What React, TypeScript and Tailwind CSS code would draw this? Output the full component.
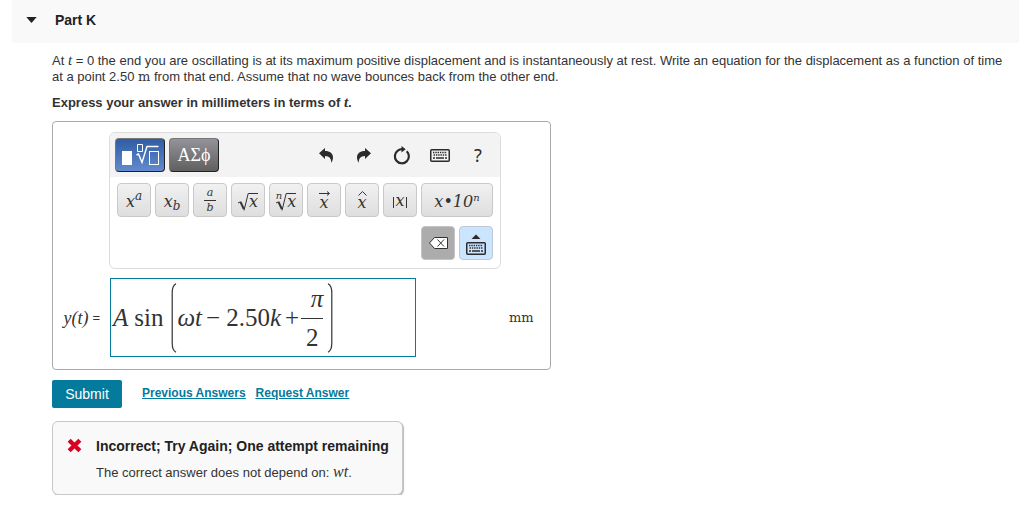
import type { ReactNode } from "react";

const serif = "font-['Liberation_Serif',serif]";

function ToolButton({ label, wide, children }: { label: string; wide?: boolean; children: ReactNode }) {
  return (
    <button
      type="button"
      aria-label={label}
      className={`flex h-[34px] items-center justify-center rounded border border-[#c9c9c9] bg-linear-to-b from-[#f1f1f1] to-[#dedede] pt-1 text-[#333] font-['DejaVu_Serif','Liberation_Serif',serif] text-base leading-none italic ${wide ? "w-[72px]" : "w-[34px]"}`}
    >
      {children}
    </button>
  );
}

function IconButton({ label, children }: { label: string; children: ReactNode }) {
  return (
    <button type="button" aria-label={label} className="flex h-[34px] w-[34px] items-center justify-center text-[#2b2b2b]">
      {children}
    </button>
  );
}

function Keyboard() {
  return (
    <svg width="20" height="13" viewBox="0 0 20 13" fill="none" stroke="currentColor" aria-hidden="true">
      <rect x="0.75" y="0.75" width="18.5" height="11.5" rx="1" strokeWidth="1.5" />
      <path d="M3 3.5h14M3.600 6h13" strokeWidth="1.3" strokeDasharray="1.4 0.9" />
      <path d="M3 9h2M6 9h8M15 9h2" strokeWidth="1.400" />
    </svg>
  );
}

function UndoArrow({ flip }: { flip?: boolean }) {
  return (
    <svg width="14" height="15" viewBox="0 0 14 15" fill="currentColor" className={flip ? "-scale-x-100" : ""} aria-hidden="true">
      <path d="M0 5.2 6 0v3.1c5.200 0 8 2.600 8 6.300 0 2.200-.8 3.900-1.900 5.300.3-3.700-1.300-6.500-6.100-6.700v2.900z" />
    </svg>
  );
}

function Radical({ nth }: { nth?: boolean }) {
  return (
    <span className="flex items-start">
      {nth && <span className="-mt-0.5 -mr-1.5 text-[10px] leading-none">n</span>}
      <svg width="11" height="18" viewBox="0 0 11 18" fill="none" stroke="currentColor" aria-hidden="true">
        <path d="M0 10l2.500-1.200" />
        <path d="M2.500 8.800 5.800 16" strokeWidth="2" />
        <path d="M6 17.500 10.200.5H11" />
      </svg>
      <span className="h-[18px] border-t border-[#333]">x</span>
    </span>
  );
}

function Paren({ flip }: { flip?: boolean }) {
  return (
    <svg width="6" height="70" viewBox="0 0 6 70" fill="none" stroke="#333" className={flip ? "-scale-x-100" : ""} aria-hidden="true">
      <path d="M5 .7C2.300 2 1.200 5 1.200 10v50c0 5 1.100 8 3.800 9.300" strokeWidth="1.2" />
    </svg>
  );
}

function MathToolbar() {
  return (
    <div className="w-[392px] rounded-md border border-[#dcdcdc] bg-white">
      <div className="flex h-11 items-center justify-between rounded-t-md bg-[#f3f3f3] px-[5px]">
        <div className="flex gap-1">
          <button type="button" aria-label="Templates" className="flex h-[34px] w-[50px] items-center justify-center rounded border border-[#777] border-r-[#222] border-b-[#222] bg-linear-to-b from-[#2f5ca4] to-[#638bcd]">
            <svg width="38" height="24" viewBox="0 0 38 24" fill="none" stroke="white" aria-hidden="true">
              <rect x="1" y="8" width="10" height="14" fill="white" stroke="none" />
              <path d="M16.500 1.500h5v7h-5z" />
              <path d="M15.500 12l2-1 3.500 8.500L26 3.500h11.500" strokeWidth="1.4" />
              <rect x="28.500" y="8.500" width="9" height="13" />
            </svg>
          </button>
          <button type="button" aria-label="Symbols" className="flex h-[34px] w-[50px] items-center justify-center rounded border border-[#777] border-r-[#222] border-b-[#222] bg-linear-to-b from-[#94939a] to-[#606060] font-['Liberation_Serif',serif] text-lg leading-none text-white">
            ΑΣϕ
          </button>
        </div>
        <div className="flex gap-1">
          <IconButton label="Undo"><UndoArrow /></IconButton>
          <IconButton label="Redo"><UndoArrow flip /></IconButton>
          <IconButton label="Reset">
            <svg width="18" height="19" viewBox="0 0 18 19" fill="none" stroke="currentColor" aria-hidden="true">
              <path d="M13.700 5.200A7 7 0 1 1 4.800 4.600Q6.500 3.200 9.500 3.200" strokeWidth="2.200" />
              <path d="M8.500 0 12.700 3.300 8.500 6.500z" fill="currentColor" stroke="none" />
            </svg>
          </IconButton>
          <IconButton label="Keyboard shortcuts"><Keyboard /></IconButton>
          <IconButton label="Help"><span className="font-['Noto_Sans',sans-serif] text-lg leading-none">?</span></IconButton>
        </div>
      </div>
      <div className="flex flex-col items-end gap-[9px] px-[7px] pt-1.5 pb-2">
        <div className="flex gap-1">
          <ToolButton label="Superscript"><span>x</span><sup className="-top-1.5 text-xs leading-none">a</sup></ToolButton>
          <ToolButton label="Subscript"><span>x</span><sub className="top-1 bottom-auto text-xs leading-none">b</sub></ToolButton>
          <ToolButton label="Fraction">
            <span className="flex flex-col pb-1 text-[11px] leading-[10px]">
              <span className="border-b border-[#333] px-0.5 pb-0.5">a</span>
              <span className="px-0.5 pt-0.5">b</span>
            </span>
          </ToolButton>
          <ToolButton label="Square root"><Radical /></ToolButton>
          <ToolButton label="Nth root"><Radical nth /></ToolButton>
          <ToolButton label="Vector">
            <span className="flex flex-col items-center pb-1">
              <svg width="11" height="5" viewBox="0 0 11 5" fill="none" stroke="currentColor" aria-hidden="true"><path d="M0 2.500h10M8 .5l2.500 2L8 4.500" /></svg>
              <span className="leading-[14px]">x</span>
            </span>
          </ToolButton>
          <ToolButton label="Hat">
            <span className="flex flex-col items-center pb-1">
              <svg width="9" height="5" viewBox="0 0 9 5" fill="none" stroke="currentColor" aria-hidden="true"><path d="M.5 4.500l4-4 4 4" /></svg>
              <span className="leading-[14px]">x</span>
            </span>
          </ToolButton>
          <ToolButton label="Absolute value"><span className="flex h-[11px] items-center border-x border-[#333] px-px pb-0.5 leading-none">x</span></ToolButton>
          <ToolButton label="Scientific notation" wide><span>x•10</span><sup className="-top-1 text-[10px]">n</sup></ToolButton>
        </div>
        <div className="flex gap-1">
          <button type="button" aria-label="Backspace" className="flex h-[34px] w-[34px] items-center justify-center rounded border border-[#c4c4c4] bg-[#acacac]">
            <svg width="19" height="12" viewBox="0 0 19 12" fill="white" stroke="#333" aria-hidden="true"><path d="M5.500.5h13v11h-13l-5-5.500z" /><path d="M8.500 2.500l6.500 7M15 2.500l-6.500 7" /></svg>
          </button>
          <button type="button" aria-label="Hide keyboard" className="flex h-[34px] w-[34px] flex-col items-center justify-end gap-[3px] rounded border border-[#bdc9d6] bg-[#cce5ff] pb-1 text-[#2b2b2b]">
            <svg width="10" height="5" viewBox="0 0 10 5" fill="currentColor" aria-hidden="true"><path d="M.5 5 5 .5 9.500 5z" /></svg>
            <Keyboard />
          </button>
        </div>
      </div>
    </div>
  );
}

export default function App() {
  return (
    <main className="px-3 font-['Liberation_Sans',Arial,sans-serif] text-[13px] leading-4 text-[#333]">
      <header className="h-[43px] bg-[#f9f9f9]">
        <button type="button" aria-expanded="true" className="flex h-10 items-center gap-[18px] pl-3.5 text-sm font-bold text-[#222]">
          <svg width="11" height="6" viewBox="0 0 11 6" fill="currentColor" aria-hidden="true"><path d="M.3 0h10.400L5.500 6z" /></svg>
          Part K
        </button>
      </header>
      <div className="pt-2.5 pr-3 pl-10">
        <p>
          At <i className={`${serif} text-[15px] leading-none`}>t</i> = 0 the end you are oscillating is at its maximum positive displacement and is instantaneously at rest. Write an equation for the displacement as a function of time at a point 2.50 <span className="font-['DejaVu_Serif',serif] text-[13px] leading-none">m</span> from that end. Assume that no wave bounces back from the other end.
        </p>
        <p className="mt-2.5 font-bold">
          Express your answer in millimeters in terms of <i className={`${serif} text-[15px] leading-none`}>t</i>.
        </p>
        <form onSubmit={(e) => e.preventDefault()}>
          <section className="mt-2.5 w-[499px] max-w-full rounded border border-[#aaa] pt-2.5 pb-3">
            <div className="pl-14"><MathToolbar /></div>
            <div className="mt-[9px] flex items-center">
              <div id="answer-label" className={`${serif} flex w-[57px] items-center justify-end gap-1 pr-2.5 text-lg leading-none`}>
                <i>y(t)</i><span className="font-['Liberation_Sans',sans-serif] text-[13px]">=</span>
              </div>
              <div role="textbox" tabIndex={0} aria-labelledby="answer-label" className={`${serif} flex h-[79px] w-[306px] items-center border border-[#047a9c] pl-0.5 text-[25px] leading-none`}>
                <i>A</i>
                <span className="ml-1.5">sin</span>
                <span className="ml-2"><Paren /></span>
                <i>ωt</i>
                <span className="ml-1">−</span>
                <span className="ml-1.5">2.50</span><i>k</i>
                <span className="ml-1">+</span>
                <span className="ml-0.5 flex w-[22px] flex-col items-center">
                  <i className="flex h-[38px] items-center self-end">π</i>
                  <span className="flex h-[38px] w-full items-center justify-center border-t border-[#333]">2</span>
                </span>
                <span className="ml-1"><Paren flip /></span>
              </div>
              <span className="ml-[93px] font-['DejaVu_Serif',serif] text-[13px]">mm</span>
            </div>
          </section>
          <div className="mt-2.5 flex items-start">
            <button type="submit" className="h-7 w-[70px] rounded-xs bg-[#047a9c] text-sm text-white">Submit</button>
            <nav className="ml-5 flex gap-2.5 pt-[5px] text-xs font-bold text-[#047a9c] underline">
              <a href="#previous">Previous Answers</a>
              <a href="#request">Request Answer</a>
            </nav>
          </div>
        </form>
        <section role="status" className="mt-[13px] flex h-[74px] w-[351px] max-w-full gap-3.5 rounded-md border border-[#c7c7c7] bg-[#f9f9f9] pt-4 pl-3.5 shadow-[1px_1px_1px_#bbb]">
          <svg width="15" height="15" viewBox="0 0 14 14" stroke="#db0020" strokeWidth="4" aria-hidden="true"><path d="M2 2l10 10M12 2 2 12" /></svg>
          <div>
            <h2 className="text-sm leading-4 font-bold text-[#222]">Incorrect; Try Again; One attempt remaining</h2>
            <p className="mt-2.5">The correct answer does not depend on: <i className={`${serif} text-base leading-none`}>wt</i>.</p>
          </div>
        </section>
      </div>
    </main>
  );
}
